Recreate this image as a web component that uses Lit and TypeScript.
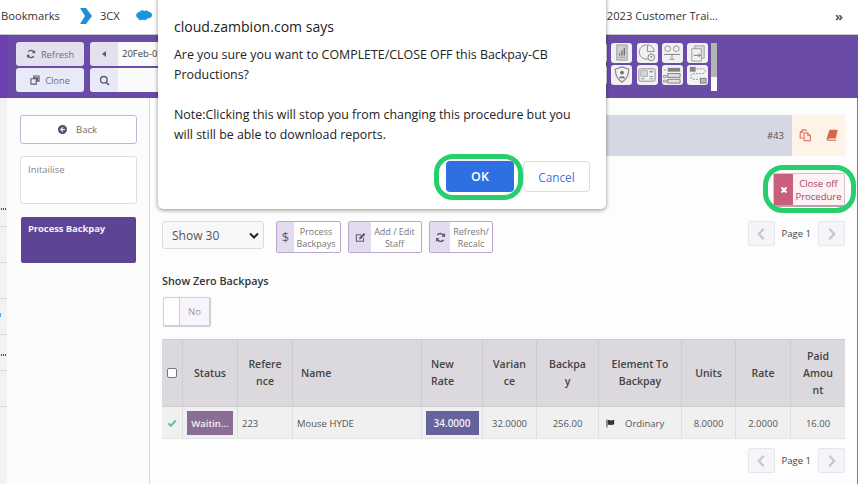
import { LitElement, html, css, svg } from "lit";
import { customElement } from "lit/decorators.js";

const i = (vb: string, body: unknown, cls = "ic") =>
  html`<svg class=${cls} viewBox=${vb} aria-hidden="true">${body}</svg>`;

const refresh = (cls = "ic") =>
  i("0 0 16 16", svg`<path d="M13.6 6.4A6 6 0 0 0 3.4 4.3M2.4 9.6a6 6 0 0 0 10.2 2.1" fill="none" stroke="currentColor" stroke-width="2.2"/><path d="M14.6 1.6v5.2H9.4zM1.4 14.4V9.2h5.2z" fill="currentColor"/>`, cls);
const clone = i("0 0 16 16", svg`<path d="M6 1.5h8.5V10H12V4.5H6zM1.5 6H10v8.5H1.5z" fill="none" stroke="currentColor" stroke-width="1.8"/>`);
const search = i("0 0 16 16", svg`<circle cx="7" cy="7" r="4.8" fill="none" stroke="currentColor" stroke-width="2"/><path d="M10.5 10.5l4 4" stroke="currentColor" stroke-width="2.4"/>`);
const back = i("0 0 16 16", svg`<path fill-rule="evenodd" d="M8 0a8 8 0 1 1 0 16A8 8 0 0 1 8 0zM8.2 3.4 3.6 8l4.6 4.6 1.3-1.3-2.3-2.2h5.3V6.9H7.2l2.3-2.2z" fill="currentColor"/>`);
const edit = i("0 0 16 16", svg`<path d="M12.5 8.8v4.7H2V4h7" fill="none" stroke="currentColor" stroke-width="1.5"/><path d="M6 10.6l.6-2.8L12.8 1.6l2.2 2.2-6.2 6.2z" fill="currentColor"/>`);
const flag = i("0 0 16 16", svg`<path d="M1.6 1v14" stroke="currentColor" stroke-width="1.6"/><path d="M3 2.4c3-1.6 5 1 8-.2 1.2-.4 2.5-.6 3.5-.6v8c-3.5 0-5 1.8-8 .8-1.3-.4-2.5-.4-3.5.2z" fill="currentColor"/>`);
const check = i("0 0 16 16", svg`<path d="M2 8.5l4 4 8-8.5" fill="none" stroke="currentColor" stroke-width="3"/>`);
const times = i("0 0 16 16", svg`<path d="M3 3l10 10M13 3 3 13" stroke="currentColor" stroke-width="4"/>`);
const prev = i("0 0 10 16", svg`<path d="M8 2 2.5 8 8 14" fill="none" stroke="currentColor" stroke-width="2.6"/>`, "pg");
const next = i("0 0 10 16", svg`<path d="M2 2l5.5 6L2 14" fill="none" stroke="currentColor" stroke-width="2.6"/>`, "pg");
const copy = i("0 0 16 16", svg`<path d="M5.5 11.5H1.5V4.5L5 1h3.5l1.5 2" fill="none" stroke="currentColor" stroke-width="1.3"/><path d="M6.5 5H11l3.5 3.5V15h-8z" fill="none" stroke="currentColor" stroke-width="1.3"/><path d="M11 5v3.5h3.5M5 1v3.5H1.5" fill="none" stroke="currentColor"/>`);
const book = i("0 0 16 16", svg`<path d="M4.5 1H15l-2.5 11H3.5c-1 0-1 1.6 0 1.6h9.700l-.4 1.400H3C.9 15 .6 13 1 11.500z" fill="currentColor"/>`);

const tiles = [
  svg`<path d="M5 2h11v16H5z" fill="#c9c9c9" stroke="#8a8a8a"/><path d="M8 13v-2M10.5 13V8M13 13V5" stroke="#555" stroke-width="1.5"/><path d="M7 15h7" stroke="#888"/>`,
  svg`<path d="M10 2a7.5 7.5 0 1 0 6.5 11M11 2a7 7 0 0 1 7 7h-7z" fill="none" stroke="#777"/><circle cx="15" cy="15" r="3.5" fill="#eee" stroke="#666"/><circle cx="15" cy="14.3" r="1" fill="#666"/>`,
  svg`<circle cx="6" cy="6" r="3" fill="none" stroke="#777"/><circle cx="15" cy="6" r="3" fill="none" stroke="#777"/><path d="M2 12h17M10.5 12v4M8 17h5" stroke="#666"/>`,
  svg`<path d="M7 3h10v13H7z" fill="#ddd" stroke="#888"/><path d="M4 6h10v13H4z" fill="#f2f2f2" stroke="#888"/><path d="M6 13h7M11 11l2 2-2 2" fill="none" stroke="#555"/>`,
  svg`<path d="M10.5 2l7 2.5c0 7-2.5 11-7 13.5-4.5-2.5-7-6.5-7-13.500z" fill="none" stroke="#777" stroke-width="1.3"/><circle cx="10.5" cy="8" r="2" fill="#555"/><path d="M7 14c.5-3 6.5-3 7 0z" fill="#555"/>`,
  svg`<rect x="2" y="4" width="17" height="13" rx="1.5" fill="none" stroke="#777"/><rect x="4" y="6" width="7" height="6" fill="#ccc" stroke="#777" stroke-width=".6"/><path d="M13 7h4M15 5.5v3M4 14.5h4M13 12h4M13 14.5h4" stroke="#777"/>`,
  svg`<path d="M6 3h13v4H6z" fill="#666"/><path d="M6 9h13v4H6zM6 15h13v4H6z" fill="#ddd" stroke="#666"/><path d="M2 5h2M1.5 11h3v2h-3zM1.5 16h3v2h-3z" stroke="#666" fill="none" stroke-width=".8"/>`,
  svg`<rect x="2" y="2" width="6" height="5" fill="#666"/><rect x="13" y="14" width="6" height="5" fill="#aaa" stroke="#666"/><path d="M9 4h6c4 0 4 5 0 5H6c-4 0-4 6 0 6h6" fill="none" stroke="#777" stroke-dasharray="2 1.2"/>`,
];

const heads: [string[], string][] = [
  [["Status"], "c"], [["Refere", "nce"], "c"], [["Name"], "l name"], [["New", "Rate"], "l nrate"], [["Varian", "ce"], "c"],
  [["Backpa", "y"], "c"], [["Element To", "Backpay"], "c"], [["Units"], "c"], [["Rate"], "c"], [["Paid", "Amou", "nt"], "c"],
];

@customElement("app-root")
export class AppRoot extends LitElement {
  static styles = css`
    :host { display: block; width: 858px; height: 484px; position: relative; overflow: hidden;
      font-family: "Open Sans", sans-serif; color: #555; background: #fdfdfd; font-size: 10px; }
    * { box-sizing: border-box; }
    .ic { width: 1em; height: 1em; display: block; flex: none; }
    .pg { width: 10px; height: 14px; display: block; }

    .bookmarks { height: 35px; background: #fff; border-bottom: 1px solid #c4c4c4; display: flex; align-items: center;
      font-size: 11.2px; color: #333; padding: 0 0 3px 1px; }
    .bm-name { margin-right: 20px; }
    .bm-cx { margin: 0 16px 0 8px; }
    .chev { width: 12px; height: 16px; display: block; flex: none; }
    .cloud { width: 16px; height: 11px; display: block; flex: none; }
    .trai { margin-left: 455px; }
    .more { margin-left: auto; margin-right: 16px; font-size: 13px; color: #555; font-weight: 700; letter-spacing: -1px; }

    .toolbar { height: 63px; background: #6a4ca8; display: flex; }
    .stripe { width: 8px; background: #6d3fb3; }
    .tb-left { margin: 7px 0 0 8px; display: flex; flex-direction: column; gap: 2px; width: 68px; }
    .tb-btn { height: 24px; border-radius: 3px; display: flex; align-items: center; justify-content: center; gap: 5px;
      font-size: 9.3px; color: #716a80; }
    .tb-btn .ic { font-size: 10px; color: #5f5875; }
    .tb-btn.a { background: #e5e0ee; }
    .tb-btn.b { background: #e8eaf8; }
    .tb-mid { margin: 7px 0 0 6px; display: flex; flex-direction: column; gap: 2px; width: 400px; }
    .tb-row { height: 24px; display: flex; border-radius: 3px; overflow: hidden; }
    .tb-cell { width: 28px; display: flex; align-items: center; justify-content: center; color: #5f5875; background: #e5e0ee; }
    .tb-row:last-child .tb-cell { background: #e8eaf8; }
    .tb-cell .ic { font-size: 11px; }
    .tri { width: 0; height: 0; border: 3.5px solid transparent; border-right: 4px solid #5f5875; border-left: 0; }
    .tb-in { flex: 1; background: #fafafa; color: #444; padding: 5px 4px; font-size: 9.5px; }
    .tile-wrap { margin: 8px 0 0 96px; display: grid; grid-template-columns: repeat(5, 21px); grid-auto-rows: 20px; gap: 2px 4.3px; height: 42px; }
    .tile { background: #f1f0f3; border-radius: 3px; display: flex; align-items: center; justify-content: center; }
    .tile svg { width: 20px; height: 20px; display: block; opacity: .8; }
    .sb { margin: 8px 0 0 3px; width: 6px; height: 48px; background: #fafafa; }
    .sb i { display: block; height: 34px; background: #b5b5b5; }

    .body { display: grid; grid-template-columns: 7px 143px 1fr; height: 386px; }
    .stub { background: #f2f2f2; padding-top: 110px; display: flex; flex-direction: column; }
    .stub i { display: block; height: 36px; border-bottom: 1px solid #dcdcdc; }
    .stub i.first { border-top: 1px solid #dcdcdc; height: 37px; margin-top: 16px; }
    .stub b { display: block; width: 1px; height: 4px; background: #49a3e8; margin-top: 14px; }
    .stub u { display: block; height: 2px; width: 5px; margin-left: 1px; background: repeating-linear-gradient(90deg, #446 0 1px, transparent 1px 2px); }
    .stub i u { margin-top: 19px; }
    .side { background: #fcfcfc; border-right: 1px solid #d8d8d8; padding: 17px 12px 0 13px; display: flex; flex-direction: column; }
    .back { height: 29px; border: 1px solid #c5b6d6; border-radius: 3px; background: #fff; display: flex; align-items: center; justify-content: center;
      gap: 9px; font-size: 9.5px; color: #6b6b6b; padding-right: 2px; }
    .back .ic { font-size: 9px; color: #5e4a78; }
    .init { margin-top: 12px; height: 48px; border: 1px solid #dedede; border-radius: 3px; background: #fff; color: #888; font-size: 9.5px; padding: 6px 7px; }
    .proc { margin: 13px 1px 0; height: 46px; background: #5e4494; border-radius: 2px; color: #f3f0f8; font-weight: 700; font-size: 9.5px; padding: 5px 7px; letter-spacing: -.1px; }

    .main { padding: 17px 12px 0 12px; border-right: 1px solid #808080; display: flex; flex-direction: column; background: #fdfdfd; }
    .bar { height: 41px; display: flex; border-radius: 4px; overflow: hidden; background: #d6d7e4; }
    .num { flex: 1; display: flex; align-items: center; justify-content: flex-end; padding-right: 8px; color: #555; font-size: 9.5px; }
    .acts { width: 53px; background: #fdf3e7; display: flex; align-items: center; justify-content: center; gap: 15px; color: #d9664e; }
    .acts .ic { font-size: 12.5px; }
    .close-row { margin-top: 17px; display: flex; justify-content: flex-end; }
    .close { width: 72px; height: 34px; background: #fdf2f4; border: 1px solid #d4c4cc; border-bottom: 2px solid #b5a5ad; border-radius: 2px; display: flex; color: #a8455f; font-size: 9.5px; line-height: 13px; }
    .close .x { width: 19px; background: #c85f7c; display: flex; align-items: center; justify-content: center; color: #fff; }
    .close .x .ic { font-size: 8px; }
    .close .t { flex: 1; display: flex; align-items: center; justify-content: center; text-align: center; }
    .ctl { margin-top: 14px; display: flex; align-items: flex-start; }
    .sel { width: 102px; height: 28px; background: #f8f8f8; border: 1px solid #dcdcdc; border-radius: 3px; display: flex; align-items: center;
      justify-content: space-between; padding: 0 4px 0 9px; font-size: 12px; color: #555; margin-right: 12px; }
    .sel svg { width: 10px; height: 7px; display: block; }
    .act { height: 32px; border: 1px solid #b8a8cc; border-radius: 2px; display: flex; background: #fff; margin-right: 7px; font-size: 9px; line-height: 12px; color: #777; }
    .act .ico { background: #e3dcee; display: flex; align-items: center; justify-content: center; color: #5f5875; font-size: 11px; }
    .act .lbl { display: flex; align-items: center; justify-content: center; text-align: center; padding-top: 1px; }
    .w1 { width: 65px; } .w1 .ico { width: 17px; } .w1 .lbl { flex: 1; padding-right: 2px; }
    .w2 { width: 74px; } .w2 .ico { width: 22px; } .w2 .lbl { flex: 1; padding-right: 3px; }
    .w3 { width: 64px; } .w3 .ico { width: 20px; } .w3 .lbl { flex: 1; }
    .dollar { font-size: 13px; font-weight: 400; }
    .pager { margin-left: auto; display: flex; align-items: center; gap: 7px; font-size: 9.5px; color: #444; }
    .pbtn { width: 27px; height: 25px; background: #f6f4f8; border: 1px solid #e8e6ec; border-radius: 2px; display: flex; align-items: center; justify-content: center; color: #c8c4d0; }
    .zero { margin-top: 21px; font-weight: 600; font-size: 10.8px; color: #333; line-height: 14px; }
    .toggle { margin: 9px 0 0 1px; width: 48px; height: 30px; border: 1px solid #cfcfd4; border-bottom-width: 2px; border-right-width: 2px; border-radius: 3px; display: flex; background: #fff; box-shadow: 0 0 1px #ddd; }
    .toggle .off { width: 16px; border-right: 1px solid #cfcfd4; }
    .toggle .no { flex: 1; background: #f7f5fb; color: #9a96a6; display: flex; align-items: center; justify-content: center; font-size: 9.5px; }
    .table { margin-top: 12px; }
    .tr { display: grid; grid-template-columns: 21px 55px 55px 129px 61px 54px 62px 83px 54px 55px 54px; }
    .th { height: 68px; background: #dbd9de; border-right: 1px solid #cfcdd2; border-top: 1px solid #cfcdd2; border-bottom: 1px solid #cfcdd2;
      display: flex; flex-direction: column; align-items: center; justify-content: center; font-weight: 600; font-size: 10.5px; line-height: 17px; color: #444; text-align: center; padding: 0 2px; white-space: nowrap; }
    .th.l { align-items: flex-start; text-align: left; }
    .th.name { padding-left: 8px; }
    .th.nrate { padding-left: 9px; }
    .th:last-child, .td:last-child { border-right: 0; }
    .cb { width: 10px; height: 10px; border: 1px solid #777; border-radius: 2px; background: #fff; }
    .td { height: 32px; padding-top: 1px; background: #f0f0f0; border-right: 1px solid #e0e0e0; border-bottom: 1px solid #e4e4e4; display: flex; align-items: center;
      justify-content: center; font-size: 9.5px; color: #555; }
    .td.l { justify-content: flex-start; padding-left: 4px; }
    .ok { color: #5fb9a6; font-size: 10px; }
    .chip { color: #f4f0f6; font-weight: 600; height: 24px; display: flex; align-items: center; justify-content: center; white-space: nowrap; }
    .wait { width: 46px; background: #8a6e95; font-size: 9.5px; }
    .rate { width: 53px; background: #65629e; font-size: 10px; }
    .el { justify-content: flex-start; padding-left: 7px; gap: 10px; color: #555; }
    .el .ic { font-size: 9px; color: #333; }
    .pager.bot { margin-top: 9px; justify-content: flex-end; }

    .dialog { position: absolute; left: 158px; top: -6px; width: 448px; height: 215px; background: #fff; border-radius: 5px;
      box-shadow: 0 1px 4px rgba(0,0,0,.45); padding: 22px 16px 0; color: #222; display: flex; flex-direction: column; }
    .d-title { font-size: 14.05px; line-height: 22px; }
    .d-msg { margin-top: 7px; font-size: 12.4px; line-height: 20px; }
    .d-msg p { margin: 0 0 20px; }
    .d-msg p:last-child { margin-bottom: 0; }
    .d-btns { margin-top: 16px; display: flex; justify-content: flex-end; gap: 9px; }
    .d-b { height: 31px; border-radius: 4px; display: flex; align-items: center; justify-content: center; }
    .d-ok { width: 68px; background: #2f6fe4; color: #fff; font-size: 12.5px; font-weight: 600; }
    .d-cancel { width: 67px; background: #fff; border: 1px solid #dcdcdc; color: #4a6fe0; font-size: 11.8px; font-weight: 500; }
    .ring { position: absolute; border: 5px solid #26cf6c; pointer-events: none; }
    .ring.r1 { left: 434px; top: 154px; width: 89px; height: 46px; border-radius: 19px; }
    .ring.r2 { left: 763px; top: 165px; width: 93px; height: 48px; border-radius: 20px; }
  `;

  render() {
    return html`
      <div class="bookmarks">
        <span class="bm-name">Bookmarks</span>
        <svg class="chev" viewBox="0 0 12 16"><path d="M0 0h6l6 8-6 8H0l5-8z" fill="#1c8fd6"/></svg>
        <span class="bm-cx">3CX</span>
        <svg class="cloud" viewBox="0 0 16 11"><path d="M4 1.5C5 .2 7 0 8 1c1.5-1 4-.8 5 1 2-.2 3 1.5 3 3 0 2.5-2 3.5-4 3-1 2-4 3-5.5 1.5C4.5 11 2.5 10 2 8 .5 7.5-.5 5.5.5 4 1 3 2.5 2 4 1.5z" fill="#1798dd"/></svg>
        <span class="trai">2023 Customer Trai...</span>
        <span class="more">&raquo;</span>
      </div>
      <div class="toolbar">
        <div class="stripe"></div>
        <div class="tb-left">
          <div class="tb-btn a">${refresh()}<span>Refresh</span></div>
          <div class="tb-btn b">${clone}<span>Clone</span></div>
        </div>
        <div class="tb-mid">
          <div class="tb-row"><div class="tb-cell"><span class="tri"></span></div><div class="tb-in">20Feb-0</div></div>
          <div class="tb-row"><div class="tb-cell">${search}</div><div class="tb-in"></div></div>
        </div>
        <div class="tile-wrap">
          <div class="tile"></div>${tiles.slice(0, 4).map((t) => html`<div class="tile"><svg viewBox="0 0 21 21">${t}</svg></div>`)}
          <div class="tile"></div>${tiles.slice(4).map((t) => html`<div class="tile"><svg viewBox="0 0 21 21">${t}</svg></div>`)}
        </div>
        <div class="sb"><i></i></div>
      </div>
      <div class="body">
        <div class="stub"><u></u><i class="first"></i><i></i><i><b></b></i><i><u></u></i><i></i></div>
        <div class="side">
          <div class="back">${back}<span>Back</span></div>
          <div class="init">Initailise</div>
          <div class="proc">Process Backpay</div>
        </div>
        <div class="main">
          <div class="bar">
            <div class="num">#43</div>
            <div class="acts">${copy}${book}</div>
          </div>
          <div class="close-row">
            <div class="close"><div class="x">${times}</div><div class="t">Close off<br />Procedure</div></div>
          </div>
          <div class="ctl">
            <div class="sel"><span>Show 30</span><svg viewBox="0 0 10 7"><path d="M1 1.5l4 4 4-4" fill="none" stroke="#222" stroke-width="2"/></svg></div>
            <div class="act w1"><div class="ico"><span class="dollar">$</span></div><div class="lbl">Process<br />Backpays</div></div>
            <div class="act w2"><div class="ico">${edit}</div><div class="lbl">Add / Edit<br />Staff</div></div>
            <div class="act w3"><div class="ico">${refresh()}</div><div class="lbl">Refresh/<br />Recalc</div></div>
            <div class="pager"><div class="pbtn">${prev}</div><span>Page 1</span><div class="pbtn">${next}</div></div>
          </div>
          <div class="zero">Show Zero Backpays</div>
          <div class="toggle"><div class="off"></div><div class="no">No</div></div>
          <div class="table">
            <div class="tr">
              <div class="th"><div class="cb"></div></div>
              ${heads.map(([lines, a]) => html`<div class="th ${a}">${lines.map((l) => html`<div>${l}</div>`)}</div>`)}
            </div>
            <div class="tr">
              <div class="td ok">${check}</div>
              <div class="td"><div class="chip wait">Waitin...</div></div>
              <div class="td l">223</div>
              <div class="td l">Mouse HYDE</div>
              <div class="td"><div class="chip rate">34.0000</div></div>
              <div class="td">32.0000</div>
              <div class="td">256.00</div>
              <div class="td el">${flag}<span>Ordinary</span></div>
              <div class="td">8.0000</div>
              <div class="td">2.0000</div>
              <div class="td">16.00</div>
            </div>
          </div>
          <div class="pager bot"><div class="pbtn">${prev}</div><span>Page 1</span><div class="pbtn">${next}</div></div>
        </div>
      </div>
      <div class="dialog">
        <div class="d-title">cloud.zambion.com says</div>
        <div class="d-msg">
          <p>Are you sure you want to COMPLETE/CLOSE OFF this Backpay-CB Productions?</p>
          <p>Note:Clicking this will stop you from changing this procedure but you will still be able to download reports.</p>
        </div>
        <div class="d-btns"><div class="d-b d-ok">OK</div><div class="d-b d-cancel">Cancel</div></div>
      </div>
      <div class="ring r1"></div>
      <div class="ring r2"></div>
    `;
  }
}
